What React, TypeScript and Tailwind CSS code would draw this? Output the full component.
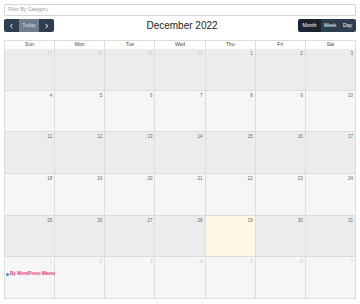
import React from 'react'

type Day = { n: number; other?: boolean; today?: boolean }

const days = ['Sun', 'Mon', 'Tue', 'Wed', 'Thu', 'Fri', 'Sat']

const weeks: Day[][] = [
  [{ n: 27, other: true }, { n: 28, other: true }, { n: 29, other: true }, { n: 30, other: true }, { n: 1 }, { n: 2 }, { n: 3 }],
  [4, 5, 6, 7, 8, 9, 10].map((n) => ({ n })),
  [11, 12, 13, 14, 15, 16, 17].map((n) => ({ n })),
  [18, 19, 20, 21, 22, 23, 24].map((n) => ({ n })),
  [{ n: 25 }, { n: 26 }, { n: 27 }, { n: 28 }, { n: 29, today: true }, { n: 30 }, { n: 31 }],
  [1, 2, 3, 4, 5, 6, 7].map((n) => ({ n, other: true })),
]

export default function App() {
  return (
    <div className="w-[360px] h-[304px] bg-white px-[4px] pt-[4px] font-['Liberation_Sans',Arial,sans-serif] overflow-hidden">
      {/* Filter */}
      <div className="h-[12px] border border-[#d4d4d4] rounded-[1px] flex items-center px-[3px] text-[5px] text-[#9a9a9a]">
        Filter By Category
      </div>

      {/* Toolbar */}
      <div className="mt-[3px] h-[13px] flex items-center justify-between">
        <div className="flex h-full rounded-[2px] overflow-hidden text-white text-[5px]">
          <div className="w-[15px] bg-[#2c3e50] flex items-center justify-center">
            <svg width="5" height="6" viewBox="0 0 5 6"><path d="M3.5 0.8 L1.3 3 L3.5 5.2" stroke="white" strokeWidth="1" fill="none" /></svg>
          </div>
          <div className="w-[20px] bg-[#6f7d8c] flex items-center justify-center text-[#d7dce1]">Today</div>
          <div className="w-[15px] bg-[#2c3e50] flex items-center justify-center">
            <svg width="5" height="6" viewBox="0 0 5 6"><path d="M1.5 0.8 L3.7 3 L1.5 5.2" stroke="white" strokeWidth="1" fill="none" /></svg>
          </div>
        </div>
        <div className="text-[10px] text-[#222] pl-[12px]">December 2022</div>
        <div className="flex h-full rounded-[2px] overflow-hidden text-white text-[5px]">
          <div className="w-[23px] bg-[#1a252f] flex items-center justify-center">Month</div>
          <div className="w-[18px] bg-[#2c3e50] flex items-center justify-center">Week</div>
          <div className="w-[17px] bg-[#2c3e50] flex items-center justify-center">Day</div>
        </div>
      </div>

      {/* Calendar */}
      <div className="mt-[8px] border-l border-t border-[#dddddd]">
        <div className="grid grid-cols-7 h-[8px]">
          {days.map((d) => (
            <div key={d} className="border-r border-b border-[#dddddd] flex items-center justify-center text-[5px] text-[#444]">
              {d}
            </div>
          ))}
        </div>
        {weeks.map((week, wi) => (
          <div key={wi} className="grid grid-cols-7 h-[41.7px]">
            {week.map((d, di) => (
              <div
                key={di}
                className={`border-r border-b border-[#dddddd] flex flex-col ${
                  d.today ? 'bg-[#fcf8e3]' : wi % 2 === 0 ? 'bg-[#ececec]' : 'bg-[#f6f6f6]'
                }`}
              >
                <div className={`text-right pr-[2px] pt-[2px] text-[4.5px] ${d.other ? 'text-[#c8c8c8]' : 'text-[#666]'}`}>{d.n}</div>
                {wi === 5 && di === 0 && (
                  <div className="mt-[5px] pl-[1px] flex items-center gap-[1px] whitespace-nowrap">
                    <span className="block shrink-0 w-[3px] h-[3px] rounded-full bg-[#3788d8]" />
                    <span className="text-[4.5px] font-bold text-[#e0357a]">By WordPress Meetup</span>
                  </div>
                )}
              </div>
            ))}
          </div>
        ))}
      </div>
    </div>
  )
}
